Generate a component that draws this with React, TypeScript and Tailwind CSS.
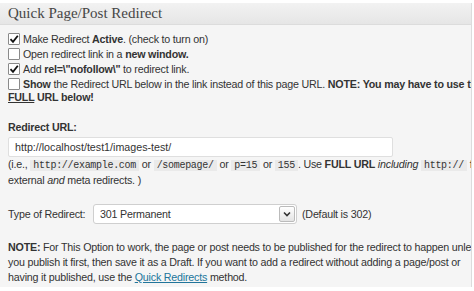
import React from "react";

const Code = ({ children }: { children: React.ReactNode }) => (
  <code className="bg-[#eaeaea] px-[3px] text-[10px] tracking-[-0.3px] text-[#333] [font-family:'Liberation_Mono',monospace]">{children}</code>
);

const Box = ({ checked }: { checked?: boolean }) => (
  <span className="inline-flex h-[12px] w-[12px] shrink-0 items-center justify-center border border-[#8a8a8a] bg-white rounded-[1px]">
    {checked && (
      <svg width="10" height="10" viewBox="0 0 10 10">
        <path d="M1.5 5.2 L4 7.8 L8.8 1.8" fill="none" stroke="#111" strokeWidth="1.8" />
      </svg>
    )}
  </span>
);

export default function App() {
  return (
    <div className="w-[474px] h-[291px] overflow-hidden bg-white [font-family:'Liberation_Sans',Arial,sans-serif] text-[10.7px] tracking-[-0.2px] leading-[15px] text-[#333]">
      <div className="mt-[3px] w-[472px] h-[284px] overflow-hidden border-r border-[#dcdcdc] bg-[#f5f5f5]">
        <div className="h-[22px] flex items-center px-[8px] bg-gradient-to-b from-[#f2f2f2] to-[#e6e6e6] border-b border-[#dcdcdc]">
          <span className="text-[15px] tracking-[0px] text-[#464646] whitespace-nowrap [font-family:'Liberation_Serif',Georgia,serif]">Quick Page/Post Redirect</span>
        </div>
        <div className="px-[8px] pt-[8px] whitespace-nowrap">
          <div className="flex flex-col gap-[3px]">
            <div className="flex items-center gap-[3px] h-[12px]"><Box checked /><span>Make Redirect <b>Active</b>. (check to turn on)</span></div>
            <div className="flex items-center gap-[3px] h-[12px]"><Box /><span>Open redirect link in a <b>new window.</b></span></div>
            <div className="flex items-center gap-[3px] h-[12px]"><Box checked /><span>Add <b>rel=\"nofollow\"</b> to redirect link.</span></div>
            <div className="flex items-center gap-[3px] h-[12px]"><Box /><span><b>Show</b> the Redirect URL below in the link instead of this page URL. <b>NOTE: You may have to use the</b></span></div>
          </div>
          <div className="font-bold"><span className="underline">FULL</span> URL below!</div>

          <div className="mt-[15px] font-bold">Redirect URL:</div>
          <div className="mt-[2px] w-[385px] h-[20px] border border-[#dfdfdf] bg-white rounded-[2px] flex items-center px-[6px] tracking-[0px]">http://localhost/test1/images-test/</div>
          <div>
            (i.e., <Code>http://example.com</Code> or <Code>/somepage/</Code> or <Code>p=15</Code> or <Code>155</Code>. Use <b>FULL URL</b> <i>including</i> <Code>http://</Code> for all
            <br />external <i>and</i> meta redirects. )
          </div>

          <div className="mt-[16px] flex items-center h-[20px]">
            <span className="w-[85px]">Type of Redirect:</span>
            <div className="w-[204px] h-[20px] border border-[#cfcfcf] bg-white rounded-[3px] flex items-center justify-between pl-[6px] pr-[1px]">
              <span>301 Permanent</span>
              <span className="w-[16px] h-[16px] border border-[#bbb] rounded-[2px] bg-gradient-to-b from-white to-[#e4e4e4] flex items-center justify-center">
                <svg width="8" height="6" viewBox="0 0 8 6"><path d="M1 1.5 L4 4.5 L7 1.5" fill="none" stroke="#333" strokeWidth="1.6" /></svg>
              </span>
            </div>
            <span className="ml-[5px]">(Default is 302)</span>
          </div>

          <div className="mt-[16px]">
            <b>NOTE:</b> For This Option to work, the page or post needs to be published for the redirect to happen unless
            <br />you publish it first, then save it as a Draft. If you want to add a redirect without adding a page/post or
            <br />having it published, use the <span className="text-[#21759b] underline">Quick Redirects</span> method.
          </div>
        </div>
      </div>
    </div>
  );
}
